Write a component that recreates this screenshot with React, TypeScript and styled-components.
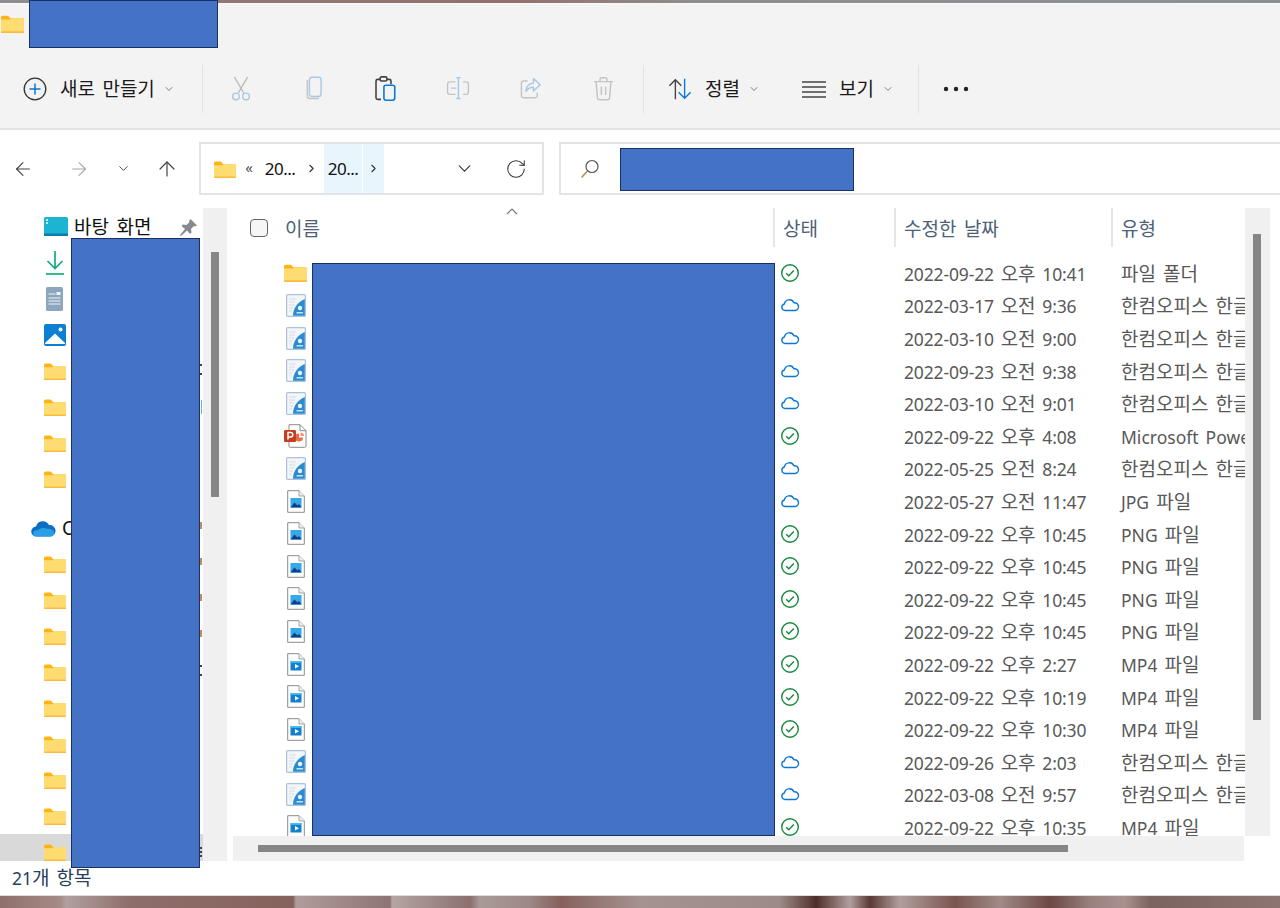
import React from "react";
import styled, { createGlobalStyle } from "styled-components";
import { ArrowLeft, ArrowRight, ArrowUp, ChevronDown, ChevronRight, RotateCw } from "lucide-react";

type Kind = "folder" | "hwp" | "ppt" | "image" | "video";
type Status = "ok" | "cloud";
type Tail = "bar" | "dots" | "arc" | "specks";

const files: { kind: Kind; status: Status; date: string; type: string }[] = [
    { kind: "folder", status: "ok", date: "2022-09-22 오후 10:41", type: "파일 폴더" },
    { kind: "hwp", status: "cloud", date: "2022-03-17 오전 9:36", type: "한컴오피스 한글 문서" },
    { kind: "hwp", status: "cloud", date: "2022-03-10 오전 9:00", type: "한컴오피스 한글 문서" },
    { kind: "hwp", status: "cloud", date: "2022-09-23 오전 9:38", type: "한컴오피스 한글 문서" },
    { kind: "hwp", status: "cloud", date: "2022-03-10 오전 9:01", type: "한컴오피스 한글 문서" },
    { kind: "ppt", status: "ok", date: "2022-09-22 오후 4:08", type: "Microsoft PowerPoint" },
    { kind: "hwp", status: "cloud", date: "2022-05-25 오전 8:24", type: "한컴오피스 한글 문서" },
    { kind: "image", status: "cloud", date: "2022-05-27 오전 11:47", type: "JPG 파일" },
    { kind: "image", status: "ok", date: "2022-09-22 오후 10:45", type: "PNG 파일" },
    { kind: "image", status: "ok", date: "2022-09-22 오후 10:45", type: "PNG 파일" },
    { kind: "image", status: "ok", date: "2022-09-22 오후 10:45", type: "PNG 파일" },
    { kind: "image", status: "ok", date: "2022-09-22 오후 10:45", type: "PNG 파일" },
    { kind: "video", status: "ok", date: "2022-09-22 오후 2:27", type: "MP4 파일" },
    { kind: "video", status: "ok", date: "2022-09-22 오후 10:19", type: "MP4 파일" },
    { kind: "video", status: "ok", date: "2022-09-22 오후 10:30", type: "MP4 파일" },
    { kind: "hwp", status: "cloud", date: "2022-09-26 오후 2:03", type: "한컴오피스 한글 문서" },
    { kind: "hwp", status: "cloud", date: "2022-03-08 오전 9:57", type: "한컴오피스 한글 문서" },
    { kind: "video", status: "ok", date: "2022-09-22 오후 10:35", type: "MP4 파일" },
];

// little bits of folder names that stick out right of the blue box
const upperTails: (Tail | undefined)[] = ["dots", "arc", undefined, undefined];
const lowerTails: (Tail | undefined)[] = ["bar", "bar", "bar", "dots", undefined, undefined, undefined, undefined];

// hangul runs sit larger than digits and latin in this font pairing
const Mixed = ({ text }: { text: string }) => (
    <>
        {text.split(/([가-힣]+)/).map((part, i) => (i % 2 ? <Hangul key={i}>{part}</Hangul> : part))}
    </>
);

const FolderIcon = ({ size = 22 }: { size?: number }) => (
    <svg width={size} height={size} viewBox="0 0 22 22">
        <path d="M0 5a1.5 1.5 0 0 1 1.5-1.5h5.2L9 6h11.5A1.5 1.5 0 0 1 22 7.5V10H0z" fill="#fdb515" />
        <path d="M0 7.2h8.6L10 6h10.6A1.4 1.4 0 0 1 22 7.4v11.1a1.5 1.5 0 0 1-1.5 1.5h-19A1.5 1.5 0 0 1 0 18.500z" fill="#ffdc72" />
        <rect x="0" y="18.500" width="22" height="1.500" rx=".7" fill="#f9bc3a" />
    </svg>
);

const HwpIcon = () => (
    <svg width="20" height="23" viewBox="0 0 20 23">
        <rect x=".6" y=".6" width="18.800" height="21.800" rx="1" fill="#f3f6f9" stroke="#a9c3de" strokeWidth="1.200" />
        <path d="M3 5h7M3 8h6M3 11h5M3 14h4M3 17h3" stroke="#d7dce0" />
        <path d="M18.800 5C12 8 7 14 7 21.800h11.800z" fill="#2a8ccf" />
        <circle cx="14" cy="14" r="2.200" fill="#e4f2fb" />
        <path d="M10.500 18.800h6.500" stroke="#d5e9f6" strokeWidth="1.400" />
    </svg>
);

const PptIcon = () => (
    <svg width="24" height="24" viewBox="0 0 24 24">
        <path d="M5 .7h11l6 6v15.300a1.300 1.300 0 0 1-1.300 1.300H6.300A1.300 1.300 0 0 1 5 22z" fill="#fff" stroke="#8a8a8a" />
        <path d="M16 .7v6h6" fill="none" stroke="#8a8a8a" />
        <path d="M15 9.500a4 4 0 0 0 0 8 4 4 0 0 0 4-4h-4z" fill="#ed6c47" />
        <path d="M16.500 8.500a3.500 3.500 0 0 1 3.500 3.500h-3.500z" fill="#ff8f6b" />
        <rect x="0" y="6" width="12" height="12" rx="1.200" fill="#c43e1c" />
        <path d="M4 15.500v-7h2.600a2.200 2.200 0 0 1 0 4.400H4" fill="none" stroke="#fff" strokeWidth="1.500" />
    </svg>
);

const PageIcon = ({ video }: { video?: boolean }) => (
    <svg width="18" height="23" viewBox="0 0 18 23">
        <path d="M.7.7h11.300l5.300 5.300v16.300H.7z" fill="#fff" stroke="#8d8d8d" />
        <path d="M12 .7v5.300h5.300" fill="#efefef" stroke="#a5a5a5" />
        {video ? (
            <>
                <rect x="3.500" y="8" width="11" height="9.500" fill="#1280cc" />
                <rect x="3.500" y="8" width="11" height="1.800" fill="#49bdf0" />
                <path d="M8 11l4 2.300-4 2.300z" fill="#fff" />
            </>
        ) : (
            <>
                <rect x="3.500" y="8" width="11" height="9.500" fill="#35a8e8" />
                <path d="M3.500 17.500l4-5 3 3 1.500-1.500 2.500 3.500z" fill="#0d3f8a" />
            </>
        )}
    </svg>
);

const FileIcon = ({ kind }: { kind: Kind }) => {
    if (kind === "folder") return <FolderIcon size={23} />;
    if (kind === "hwp") return <HwpIcon />;
    if (kind === "ppt") return <PptIcon />;
    return <PageIcon video={kind === "video"} />;
};

const StatusIcon = ({ status }: { status: Status }) =>
    status === "ok" ? (
        <svg width="20" height="20" viewBox="0 0 20 20" fill="none">
            <circle cx="10" cy="10" r="8.300" stroke="#16893f" strokeWidth="1.400" />
            <path d="M6.200 10.300l2.600 2.500 5-5.200" stroke="#16893f" strokeWidth="1.400" />
        </svg>
    ) : (
        <svg width="20" height="20" viewBox="0 0 20 20" fill="none">
            <path
                d="M5 15.500a3.300 3.300 0 0 1-.6-6.500 5 5 0 0 1 9.500-1.200 3.900 3.900 0 0 1 1.400 7.700z"
                stroke="#0b78d4"
                strokeWidth="1.400"
                strokeLinejoin="round"
            />
        </svg>
    );

const tools = [
    <svg key="cut" width="22" height="25" viewBox="0 0 26 30" fill="none" stroke="#a9c8e4" strokeWidth="1.700">
        <path d="M5 1l11 19M21 1L10 20" stroke="#bdbdbd" />
        <circle cx="7" cy="24.500" r="4" />
        <circle cx="19" cy="24.500" r="4" />
    </svg>,
    <svg key="copy" width="22" height="25" viewBox="0 0 26 30" fill="none" strokeWidth="1.700">
        <path d="M5 5v19a3 3 0 0 0 3 3h11" stroke="#c4c4c4" />
        <rect x="7.500" y="1.500" width="14" height="23" rx="3" stroke="#a9c8e4" />
    </svg>,
    <svg key="paste" width="24" height="25" viewBox="0 0 28 30" fill="none" strokeWidth="1.900">
        <path d="M8 28H4a2 2 0 0 1-2-2V6a2 2 0 0 1 2-2h14a2 2 0 0 1 2 2v4" stroke="#444" />
        <rect x="7" y="1" width="8" height="5" rx="1.500" fill="#f3f3f3" stroke="#444" />
        <rect x="11.500" y="11" width="13" height="18" rx="2.500" stroke="#0b78d4" />
    </svg>,
    <svg key="rename" width="24" height="25" viewBox="0 0 28 30" fill="none" strokeWidth="1.700">
        <path d="M11 7H4a2.500 2.500 0 0 0-2.500 2.500v10A2.500 2.500 0 0 0 4 22h7M20 7h4a2.500 2.500 0 0 1 2.500 2.500v10A2.500 2.500 0 0 1 24 22h-4" stroke="#c4c4c4" />
        <path d="M5.500 14.500H12M12 2h5M12 27h5M14.500 2v25" stroke="#a9c8e4" />
    </svg>,
    <svg key="share" width="22" height="25" viewBox="0 0 26 30" fill="none" strokeWidth="1.700">
        <path d="M9 6H4a2.500 2.500 0 0 0-2.500 2.500v15A2.500 2.500 0 0 0 4 26h14a2.500 2.500 0 0 0 2.500-2.500V20" stroke="#c4c4c4" />
        <path d="M16 3l8 7.500-8 7.500v-4.500c-4.500 0-7 1.500-9 5 .3-6 3.500-9.500 9-10z" stroke="#a9c8e4" strokeLinejoin="round" />
    </svg>,
    <svg key="del" width="21" height="26" viewBox="0 0 24 30" fill="none" stroke="#c4c4c4" strokeWidth="1.700">
        <path d="M1 6.500h22M8 6.500V4a2 2 0 0 1 2-2h4a2 2 0 0 1 2 2v2.500M3.500 6.500l1.500 19a2.500 2.500 0 0 0 2.500 2h9a2.500 2.500 0 0 0 2.500-2l1.500-19M9.500 12v10M14.500 12v10" />
    </svg>,
];

const App = () => {
    return (
        <Page>
            <GlobalStyle />
            <TopEdge />
            <TitleBar>
                <FolderIcon size={23} />
            </TitleBar>

            <Toolbar>
                <NewButton>
                    <svg width="24" height="24" viewBox="0 0 24 24" fill="none">
                        <circle cx="12" cy="12" r="10.800" stroke="#333" strokeWidth="1.300" />
                        <path d="M12 6.500v11M6.500 12h11" stroke="#0b78d4" strokeWidth="1.500" />
                    </svg>
                    <ToolLabel>새로 만들기</ToolLabel>
                    <SmallChevron size={12} />
                </NewButton>
                <Divider />
                <ToolGroup>
                    {tools.map((icon, i) => (
                        <IconButton key={i}>{icon}</IconButton>
                    ))}
                </ToolGroup>
                <Divider />
                <MenuButton $width={134}>
                    <svg width="24" height="24" viewBox="0 0 26 24" fill="none" strokeWidth="1.500">
                        <path d="M8 23V2M1.500 8.500L8 2l6.500 6.500" stroke="#444" />
                        <path d="M18 1v21M11.500 15.500L18 22l6.500-6.500" stroke="#0b78d4" />
                    </svg>
                    <ToolLabel>정렬</ToolLabel>
                    <SmallChevron size={12} />
                </MenuButton>
                <MenuButton $width={140}>
                    <svg width="24" height="18" viewBox="0 0 24 18" fill="none" stroke="#444" strokeWidth="1.300">
                        <path d="M0 2h24M0 7h24M0 12h24M0 17h24" />
                    </svg>
                    <ToolLabel>보기</ToolLabel>
                    <SmallChevron size={12} />
                </MenuButton>
                <Divider />
                <MoreDots>
                    <svg width="26" height="6" viewBox="0 0 26 6" fill="#222">
                        <circle cx="3" cy="3" r="2.200" />
                        <circle cx="13" cy="3" r="2.200" />
                        <circle cx="23" cy="3" r="2.200" />
                    </svg>
                </MoreDots>
            </Toolbar>

            <NavRow>
                <NavButton $width={46} $dim={false}><ArrowLeft size={22} strokeWidth={1.200} /></NavButton>
                <NavButton $width={66} $dim={true}><ArrowRight size={22} strokeWidth={1.200} /></NavButton>
                <NavButton $width={22} $dim={false}><ChevronDown size={15} strokeWidth={1.500} /></NavButton>
                <NavButton $width={65} $dim={false}><ArrowUp size={24} strokeWidth={1.200} /></NavButton>
                <AddressBox>
                    <FolderIcon size={22} />
                    <Crumbs>«</Crumbs>
                    <Crumb>20...</Crumb>
                    <CrumbArrow><ChevronRight size={13} strokeWidth={2} /></CrumbArrow>
                    <Crumb $hover>20...</Crumb>
                    <CrumbArrow $hover><ChevronRight size={13} strokeWidth={2} /></CrumbArrow>
                    <AddressEnd>
                        <ChevronDown size={21} strokeWidth={1.300} color="#333" />
                        <RotateCw size={22} strokeWidth={1.100} color="#333" />
                    </AddressEnd>
                </AddressBox>
                <SearchBox>
                    <svg width="22" height="22" viewBox="0 0 22 22" fill="none" stroke="#555" strokeWidth="1.200">
                        <circle cx="13" cy="8.500" r="6" />
                        <path d="M8.500 13l-6 6.500" stroke="#b08a55" strokeWidth="1.500" />
                    </svg>
                </SearchBox>
            </NavRow>

            <Body>
                <Sidebar>
                    <SideList>
                        <SideRow>
                            <svg width="24" height="20" viewBox="0 0 24 20">
                                <rect width="24" height="19" rx="1.500" fill="#1db4d2" />
                                <rect y="16.500" width="24" height="2.500" fill="#0b7fae" />
                                <path d="M2 3h2M2 6h2" stroke="#fff" strokeWidth="1.500" />
                            </svg>
                            <SideLabel>바탕 화면</SideLabel>
                            <PinMark>
                                <svg width="17" height="17" viewBox="0 0 17 17" fill="#858a90">
                                    <path d="M10.500 0L17 6.500l-2 1-1-.5-3 3 .5 3.500-1.500 1.500-3-3.500L1.500 16.500 0 17l.5-1.500L5 10 1.500 7 3 5.500l3.500.5 3-3L9 2z" />
                                </svg>
                            </PinMark>
                        </SideRow>
                        <SideRow>
                            <svg width="22" height="26" viewBox="0 0 22 26" fill="none" stroke="#10ad7e" strokeWidth="1.700">
                                <path d="M11 1v17M3.500 11l7.500 7.500 7.500-7.500" />
                                <path d="M2 24h18" />
                            </svg>
                        </SideRow>
                        <SideRow>
                            <svg width="22" height="26" viewBox="0 0 22 26">
                                <rect x="2" y="1" width="17" height="24" rx="1.500" fill="#8da6c0" />
                                <path d="M4.500 8h7M4.500 12h12M4.500 15h12M4.500 18h12" stroke="#f0f4f8" strokeWidth="1.200" />
                                <rect x="12.500" y="6" width="4" height="3" fill="#f0f4f8" />
                            </svg>
                        </SideRow>
                        <SideRow>
                            <svg width="22" height="22" viewBox="0 0 22 22">
                                <rect width="22" height="22" rx="2" fill="#0c7fd3" />
                                <path d="M1 19L11 9.500 21 19v1H1z" fill="#fff" />
                                <circle cx="16.500" cy="5.500" r="2" fill="#fff" />
                            </svg>
                        </SideRow>
                        {upperTails.map((tail, i) => (
                            <SideRow key={i}>
                                <FolderIcon />
                                {tail && <NameTail $tail={tail} />}
                            </SideRow>
                        ))}
                        <SideRow $gap $indent={31}>
                            <svg width="25" height="18" viewBox="0 0 25 18">
                                <path d="M5.500 17.500A5 5 0 0 1 5 7.500a7 7 0 0 1 13-1.500 5.500 5.500 0 0 1 1.500 11.500z" fill="#0c6fc4" />
                                <path d="M5.500 17.500a3 3 0 0 1-.5-6c4-1 7-4 9.500-2 2 .5 4 0 5.500 1a3.500 3.500 0 0 1-1 7z" fill="#2a9fe6" />
                            </svg>
                            <SideLabel>OneDrive</SideLabel>
                            <NameTail $tail="bar" />
                        </SideRow>
                        {lowerTails.map((tail, i) => (
                            <SideRow key={i}>
                                <FolderIcon />
                                {tail && <NameTail $tail={tail} />}
                            </SideRow>
                        ))}
                        <SideRow $selected>
                            <FolderIcon />
                            <NameTail $tail="specks" />
                        </SideRow>
                    </SideList>
                    <VTrack>
                        <SideThumb />
                    </VTrack>
                </Sidebar>

                <Main>
                    <MainTop>
                        <ListPane>
                            <SortCaret>
                                <svg width="12" height="7" viewBox="0 0 12 7" fill="none" stroke="#777" strokeWidth="1.200">
                                    <path d="M1 6l5-5 5 5" />
                                </svg>
                            </SortCaret>
                            <HeaderRow>
                                <NameHead>
                                    <CheckBox />
                                    <HeadText>이름</HeadText>
                                </NameHead>
                                <HeadCell>상태</HeadCell>
                                <HeadCell>수정한 날짜</HeadCell>
                                <HeadCell>유형</HeadCell>
                            </HeaderRow>
                            {files.map((f, i) => (
                                <FileRow key={i}>
                                    <IconCell>
                                        <FileIcon kind={f.kind} />
                                    </IconCell>
                                    <StatusCell>
                                        <StatusIcon status={f.status} />
                                    </StatusCell>
                                    <DateCell>
                                        <Mixed text={f.date} />
                                    </DateCell>
                                    <TypeCell>
                                        <Mixed text={f.type} />
                                    </TypeCell>
                                </FileRow>
                            ))}
                        </ListPane>
                        <VTrack $main>
                            <MainThumb />
                        </VTrack>
                    </MainTop>
                    <HTrack>
                        <HThumb />
                    </HTrack>
                </Main>
            </Body>

            <StatusBar>
                <ItemCount>
                    <Mixed text="21개 항목" />
                </ItemCount>
            </StatusBar>
            <Wallpaper />

            <Redaction $x={29} $y={0} $w={189} $h={48} />
            <Redaction $x={620} $y={148} $w={234} $h={43} />
            <Redaction $x={71} $y={238} $w={129} $h={630} />
            <Redaction $x={312} $y={263} $w={463} $h={573} />
        </Page>
    );
};

export default App;

const GlobalStyle = createGlobalStyle`
    html, body {
        margin: 0;
        padding: 0;
        background: #fff;
        overflow: hidden;
    }
`;

const Page = styled.div`
    position: relative;
    width: 1280px;
    height: 908px;
    display: flex;
    flex-direction: column;
    overflow: hidden;
    background: #fff;
    color: #111;
    font-family: "Noto Sans", "Noto Sans CJK KR", sans-serif;
    word-spacing: 2.5px;
`;

const Hangul = styled.span`
    font-size: 19px;
`;

const TopEdge = styled.div`
    height: 3px;
    border-bottom: 1px solid #f8f8f8;
    background: linear-gradient(90deg, #8f8f8f 0, #8f7a76 15%, #93716c 40%, #8f8f8f 55%, #8c9096 100%);
`;

const TitleBar = styled.div`
    height: 57px;
    flex: none;
    padding: 8px 0 0 1px;
    box-sizing: border-box;
    background: #f3f3f3;
    display: flex;
    align-items: flex-start;
`;

const Toolbar = styled.div`
    height: 69px;
    flex: none;
    box-sizing: border-box;
    background: #f3f3f3;
    border-bottom: 2px solid #e4e4e4;
    display: flex;
    align-items: center;
    padding: 0 0 12px 23px;
`;

const NewButton = styled.div`
    width: 179px;
    display: flex;
    align-items: center;
`;

const ToolLabel = styled.span`
    margin-left: 13px;
    font-size: 19px;
    line-height: 24px;
    color: #1a1a1a;
    white-space: nowrap;
`;

const SmallChevron = styled(ChevronDown)`
    margin-left: 8px;
    color: #555;
    stroke-width: 1.5;
`;

const Divider = styled.div`
    flex: none;
    width: 1px;
    height: 48px;
    background: #e2e2e2;
`;

const ToolGroup = styled.div`
    flex: none;
    display: flex;
    margin: 0 3.6px 0 2px;
`;

const IconButton = styled.div`
    flex: none;
    width: 72.4px;
    display: flex;
    justify-content: center;
`;

const MenuButton = styled.div<{ $width: number }>`
    flex: none;
    width: ${(p) => p.$width}px;
    display: flex;
    align-items: center;
    padding-left: 24px;
    box-sizing: border-box;
`;

const MoreDots = styled.div`
    margin-left: 24px;
    display: flex;
`;

const NavRow = styled.div`
    height: 78px;
    flex: none;
    box-sizing: border-box;
    padding-top: 12px;
    display: flex;
    align-items: flex-start;
    background: #fff;
`;

const NavButton = styled.div<{ $width: number; $dim: boolean }>`
    flex: none;
    width: ${(p) => p.$width}px;
    height: 53px;
    display: flex;
    align-items: center;
    justify-content: center;
    color: ${(p) => (p.$dim ? "#a8a8a8" : "#444")};
`;

const AddressBox = styled.div`
    flex: none;
    width: 345px;
    height: 53px;
    box-sizing: border-box;
    border: 2px solid #e4e4e4;
    display: flex;
    align-items: center;
    padding-left: 13px;
`;

const Crumbs = styled.span`
    width: 26px;
    text-align: center;
    font-size: 15px;
    color: #555;
    margin-bottom: 3px;
`;

const Crumb = styled.span<{ $hover?: boolean }>`
    align-self: stretch;
    display: flex;
    align-items: center;
    justify-content: center;
    width: ${(p) => (p.$hover ? 38 : 36)}px;
    font-size: 17px;
    letter-spacing: -0.5px;
    color: #111;
    background: ${(p) => (p.$hover ? "#e9f5fd" : "transparent")};
`;

const CrumbArrow = styled.span<{ $hover?: boolean }>`
    align-self: stretch;
    display: flex;
    align-items: center;
    justify-content: center;
    width: ${(p) => (p.$hover ? 21 : 26)}px;
    margin-left: ${(p) => (p.$hover ? 1 : 0)}px;
    color: #333;
    background: ${(p) => (p.$hover ? "#e9f5fd" : "transparent")};
`;

const AddressEnd = styled.div`
    margin-left: auto;
    padding-right: 15px;
    display: flex;
    align-items: center;
    gap: 30px;
`;

const SearchBox = styled.div`
    flex: 1;
    margin-left: 15px;
    margin-right: -4px;
    height: 53px;
    box-sizing: border-box;
    border: 2px solid #e4e4e4;
    display: flex;
    align-items: center;
    padding-left: 18px;
`;

const Body = styled.div`
    height: 653px;
    flex: none;
    display: flex;
`;

const Sidebar = styled.div`
    flex: none;
    width: 229px;
    box-sizing: border-box;
    padding-right: 2px;
    display: flex;
    overflow: hidden;
`;

const SideList = styled.div`
    flex: none;
    width: 203px;
    height: 653px;
    overflow: hidden;
    padding-top: 1px;
    box-sizing: border-box;
`;

const SideRow = styled.div<{ $gap?: boolean; $indent?: number; $selected?: boolean }>`
    height: 36px;
    box-sizing: border-box;
    display: flex;
    align-items: center;
    padding-left: ${(p) => p.$indent ?? 44}px;
    margin-top: ${(p) => (p.$gap ? 13 : 0)}px;
    background: ${(p) => (p.$selected ? "#d9d9d9" : "transparent")};
    & > svg {
        flex: none;
    }
`;

const SideLabel = styled.span`
    margin-left: 6px;
    font-size: 19px;
    line-height: 24px;
    color: #111;
    white-space: nowrap;
`;

const NameTail = styled.span<{ $tail: Tail }>`
    margin-left: auto;
    margin-right: 1px;
    width: 2px;
    ${(p) =>
        p.$tail === "bar"
            ? "height: 7px; margin-bottom: 6px; background: #c98a52;"
            : p.$tail === "arc"
              ? "height: 14px; border-right: 1px solid #6db0e0; box-sizing: border-box;"
              : p.$tail === "dots"
                ? "height: 11px; margin-bottom: 4px; background: linear-gradient(#444 0 2px, transparent 2px 9px, #444 9px);"
                : "height: 10px; background: repeating-linear-gradient(#444 0 2px, transparent 2px 4px);"}
`;

const PinMark = styled.span`
    margin-left: auto;
    margin-right: 6px;
    display: flex;
`;

const VTrack = styled.div<{ $main?: boolean }>`
    flex: none;
    width: 24px;
    ${(p) => (p.$main ? "width: 25px; margin-right: 10px;" : "")}
    background: #f0f0f0;
    box-sizing: border-box;
    padding-left: 8px;
`;

const SideThumb = styled.div`
    width: 8px;
    height: 245px;
    margin-top: 44px;
    background: #868686;
`;

const MainThumb = styled.div`
    width: 8px;
    height: 486px;
    margin-top: 26px;
    background: #868686;
`;

const Main = styled.div`
    flex: 1;
    min-width: 0;
    display: flex;
    flex-direction: column;
`;

const MainTop = styled.div`
    height: 628px;
    flex: none;
    display: flex;
    padding-left: 4px;
`;

const ListPane = styled.div`
    position: relative;
    flex: 1;
    min-width: 0;
    overflow: hidden;
`;

const SortCaret = styled.span`
    position: absolute;
    left: 273px;
    top: 0;
    display: flex;
`;

const HeaderRow = styled.div`
    height: 48.6px;
    display: grid;
    grid-template-columns: 540px 121px 217px 1fr;
    box-sizing: border-box;
`;

const NameHead = styled.div`
    height: 39px;
    display: flex;
    align-items: center;
    padding-left: 17px;
`;

const CheckBox = styled.span`
    width: 18px;
    height: 18px;
    box-sizing: border-box;
    border: 1.5px solid #666;
    border-radius: 4px;
    background: #f6f6f6;
`;

const HeadText = styled.span`
    margin-left: 17px;
    font-size: 19px;
    color: #4d6078;
`;

const HeadCell = styled.div`
    height: 39px;
    box-sizing: border-box;
    border-left: 2px solid #e6e6e6;
    padding-left: 8px;
    display: flex;
    align-items: center;
    font-size: 19px;
    color: #4d6078;
    white-space: nowrap;
`;

const FileRow = styled.div`
    height: 32.6px;
    display: grid;
    grid-template-columns: 78px 462px 121px 217px 1fr;
    align-items: center;
    font-size: 17.5px;
    line-height: 24px;
    color: #585858;
    white-space: nowrap;
`;

const IconCell = styled.div`
    grid-column: 1;
    display: flex;
    justify-content: center;
    padding-left: 47px;
    box-sizing: border-box;
    width: 78px;
`;

const StatusCell = styled.div`
    grid-column: 3;
    display: flex;
    padding-left: 7px;
`;

const DateCell = styled.div`
    grid-column: 4;
    padding: 2px 0 0 10px;
    letter-spacing: -0.15px;
`;

const TypeCell = styled.div`
    grid-column: 5;
    padding: 2px 0 0 10px;
    overflow: hidden;
`;

const HTrack = styled.div`
    height: 25px;
    width: 1011px;
    margin-left: 4px;
    background: #f0f0f0;
    box-sizing: border-box;
    padding: 9px 0 0 25px;
`;

const HThumb = styled.div`
    width: 810px;
    height: 7px;
    background: #868686;
`;

const StatusBar = styled.div`
    height: 34px;
    flex: none;
    background: #fff;
    display: flex;
    align-items: center;
    padding-left: 12px;
`;

const ItemCount = styled.span`
    font-size: 17.5px;
    line-height: 24px;
    color: #28405c;
`;

const Wallpaper = styled.div`
    flex: 1;
    border-top: 1px solid #dcdcdc;
    background: linear-gradient(
        90deg,
        #8e6f6b 0,
        #a58a87 60px,
        #b0a0a0 66px,
        #8d6e6b 130px,
        #87625d 293px,
        #b09c9a 296px,
        #8e7472 390px,
        #b5a5a3 392px,
        #8b706e 470px,
        #a99a98 480px,
        #9c8886 530px,
        #86605c 560px,
        #a49391 640px,
        #9c8b89 780px,
        #4f2e2a 816px,
        #b09f9d 850px,
        #5b3835 870px,
        #b09f9d 900px,
        #7a5550 955px,
        #a08a88 1000px,
        #6c4844 1050px,
        #97807d 1090px,
        #a8918e 1125px,
        #7c6360 1150px,
        #8c7572 1280px
    );
`;

const Redaction = styled.div<{ $x: number; $y: number; $w: number; $h: number }>`
    position: absolute;
    left: ${(p) => p.$x}px;
    top: ${(p) => p.$y}px;
    width: ${(p) => p.$w}px;
    height: ${(p) => p.$h}px;
    box-sizing: border-box;
    background: #4472c4;
    border: 1px solid #1a2f66;
`;
